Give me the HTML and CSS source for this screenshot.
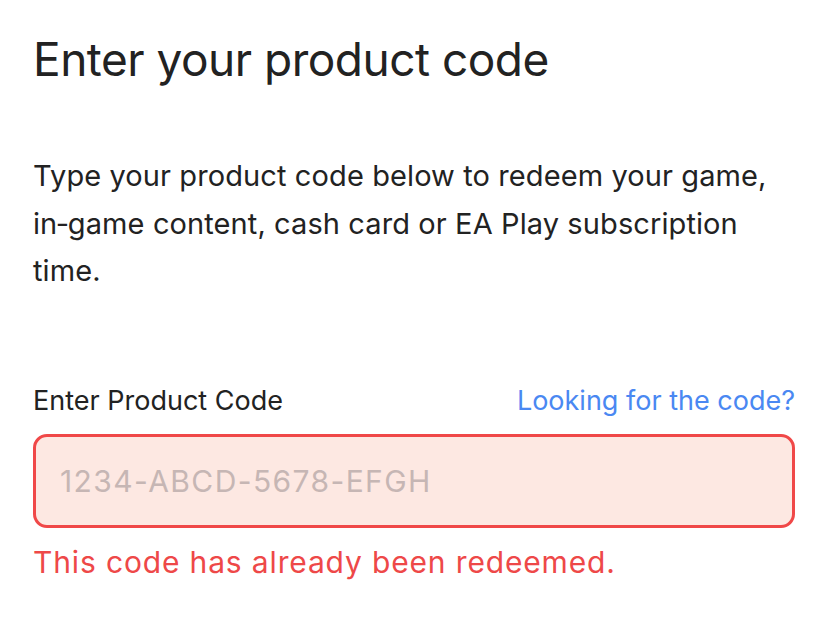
FILE: index.html
```html
<!DOCTYPE html>
<html lang="en">
<head>
<meta charset="utf-8">
<title>Enter your product code</title>
<link rel="stylesheet" href="styles.css">
</head>
<body>
<main class="page">
  <h1 class="title">Enter your product code</h1>
  <p class="intro">Type your product code below to redeem your game, in&#8209;game content, cash card or EA Play subscription time.</p>
  <div class="field">
    <div class="field-head">
      <label class="label" for="code">Enter Product Code</label>
      <a class="help" href="#">Looking for the code?</a>
    </div>
    <input class="input" id="code" type="text" placeholder="1234-ABCD-5678-EFGH">
    <p class="error">This code has already been redeemed.</p>
  </div>
</main>
</body>
</html>
```
FILE: styles.css
```css
* { box-sizing: border-box; }
html, body { margin: 0; background: #ffffff; }
body { font-family: "Inter", "Liberation Sans", sans-serif; color: #222222; }
.page { padding: 27px 33px 0 33px; }
.title { margin: 0; font-size: 46px; font-weight: 400; line-height: 64px; letter-spacing: -0.5px; }
.intro { margin: 61px 0 0 0; font-size: 29px; line-height: 47.5px; letter-spacing: 0.1px; }
.field { margin-top: 88px; }
.field-head { display: flex; justify-content: space-between; align-items: baseline; }
.label { font-size: 27px; line-height: 36px; }
.help { font-size: 27px; line-height: 36px; color: #4a88f2; text-decoration: none; }
.input { display: block; width: 100%; height: 94px; margin-top: 15px; padding: 0 24px; border: 3px solid #f04848; border-radius: 14px; background: #fde8e2; font: inherit; font-size: 30px; color: #222; outline: none; }
.input::placeholder { color: #c6b6b4; letter-spacing: 1.4px; }
.error { margin: 14px 0 0 0; font-size: 30px; line-height: 40px; color: #ee4848; letter-spacing: 0.85px; }
```
